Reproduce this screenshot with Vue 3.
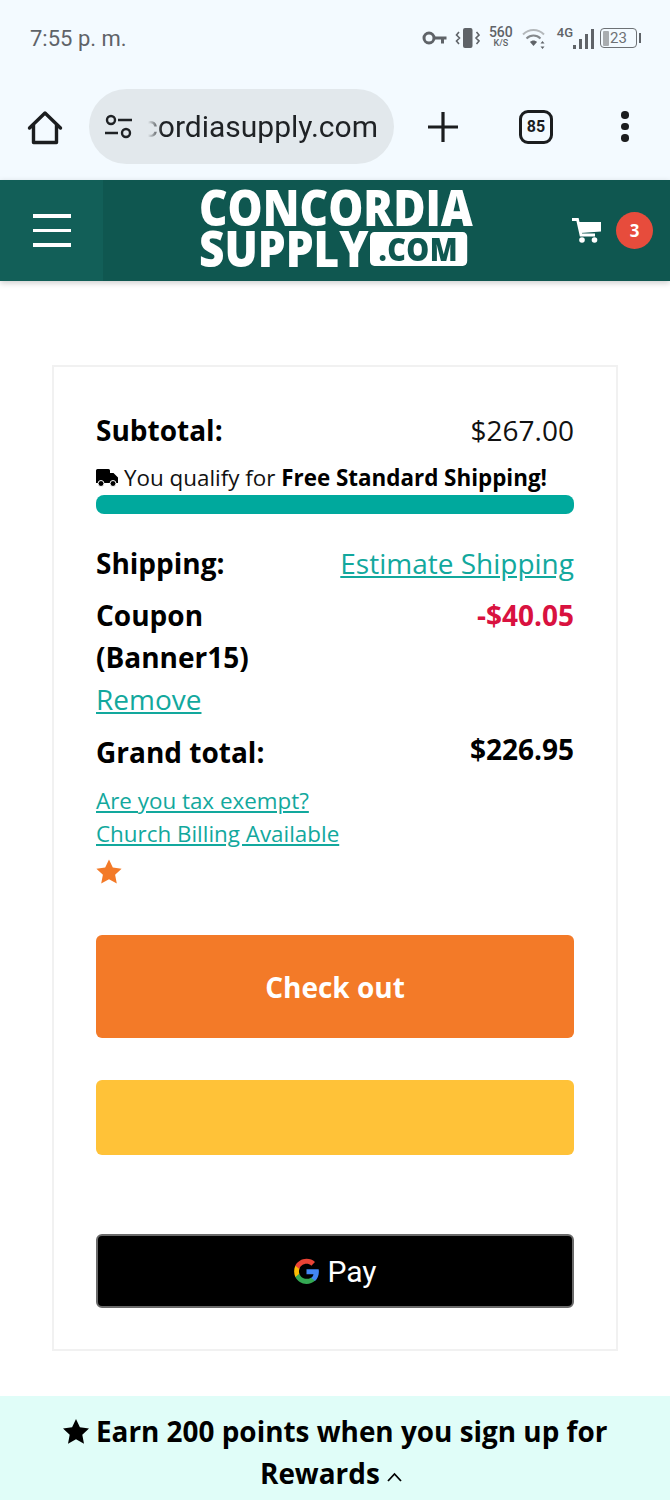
<script setup>
const summary = {
  subtotal: '$267.00',
  coupon: '-$40.05',
  total: '$226.95',
};
</script>

<template>
  <div class="screen">
    <!-- barra do sistema + navegador -->
    <div class="status-bar">
      <span class="time">7:55 p. m.</span>
      <div class="status-icons">
        <svg class="ic-key" width="25" height="14" viewBox="0 0 25 14">
          <circle cx="7" cy="7" r="5" fill="none" stroke="#5f6368" stroke-width="3" />
          <path d="M12 5.5h12.5v3H22v4h-3v-4h-7z" fill="#5f6368" />
        </svg>
        <svg class="ic-vib" width="25" height="22" viewBox="0 0 25 22">
          <rect x="8" y="1" width="9.5" height="20" rx="2" fill="#5f6368" />
          <path d="M4 5 1.5 8 4.5 11 1.5 14 4 17M21.5 5 24 8 21 11 24 14 21.5 17" fill="none" stroke="#5f6368" stroke-width="1.6" />
        </svg>
        <div class="speed"><b>560</b><i>K/S</i></div>
        <svg class="ic-wifi" width="24" height="22" viewBox="0 0 24 22">
          <path d="M1 7.5C7 1.5 16 1.5 22 7.5" fill="none" stroke="#b4b8bb" stroke-width="2" />
          <path d="M4.5 11.5C8.5 7.5 14.5 7.5 18.5 11.5" fill="none" stroke="#85898c" stroke-width="2" />
          <path d="M8 15C10 13 13 13 15 15L11.5 19z" fill="#5f6368" />
          <path d="M20.5 14l2 2.5h-4zM20.5 22l2-2.5h-4z" fill="#5f6368" />
        </svg>
        <div class="signal">
          <span class="net">4G</span>
          <div class="bars">
            <i style="height: 4px"></i><i style="height: 10px"></i><i style="height: 15px"></i><i style="height: 20px"></i>
          </div>
        </div>
        <div class="battery">
          <div class="batt-body"><i></i><span>23</span></div>
          <div class="batt-tip"></div>
        </div>
      </div>
    </div>

    <div class="browser-bar">
      <svg class="ic-home" width="36" height="36" viewBox="0 0 36 36">
        <path d="M2.5 18 18 3 33.500 18M6.500 15v17.500h23V15" fill="none" stroke="#1b1d1f" stroke-width="3.400" stroke-linejoin="round" stroke-linecap="round" />
      </svg>
      <div class="url-pill">
        <svg width="30" height="26" viewBox="0 0 30 26">
          <circle cx="7" cy="6" r="4" fill="none" stroke="#1f2225" stroke-width="2.400" />
          <path d="M14 6h14M1 19h13" stroke="#1f2225" stroke-width="2.600" />
          <circle cx="22" cy="19" r="4" fill="none" stroke="#1f2225" stroke-width="2.400" />
        </svg>
        <div class="url-clip"><span>cordiasupply.com</span></div>
      </div>
      <svg class="ic-plus" width="30" height="30" viewBox="0 0 30 30">
        <path d="M15 0v30M0 15h30" stroke="#1b1d1f" stroke-width="3.200" />
      </svg>
      <div class="tab-count">85</div>
      <div class="menu-dots"><i></i><i></i><i></i></div>
    </div>

    <!-- cabeçalho da loja -->
    <header class="site-header">
      <div class="burger"><i></i><i></i><i></i></div>
      <div class="logo">
        <div class="logo-top">CONCORDIA</div>
        <div class="logo-bottom">
          <span>SUPPLY</span><em>.COM</em>
        </div>
      </div>
      <div class="cart">
        <svg width="29" height="25" viewBox="0 0 29 25">
          <path d="M0 1.500h5.500L9 17h14" fill="none" stroke="#fff" stroke-width="2.800" />
          <path d="M6.500 4H29v9.500L8.500 15z" fill="#fff" />
          <circle cx="10" cy="22" r="2.800" fill="#fff" />
          <circle cx="22.500" cy="22" r="2.800" fill="#fff" />
        </svg>
        <span class="badge">3</span>
      </div>
    </header>

    <main class="content">
      <section class="card">
        <div class="row">
          <span class="label">Subtotal:</span>
          <span class="amount">{{ summary.subtotal }}</span>
        </div>

        <div class="ship-note">
          <svg width="22" height="18" viewBox="0 0 22 18">
            <path d="M0 1.500A1.500 1.500 0 0 1 1.500 0h11A1.500 1.500 0 0 1 14 1.500V4h3.500L22 8.500V14H0z" fill="#000" />
            <circle cx="5" cy="14.500" r="3" fill="#000" stroke="#fff" stroke-width="1" />
            <circle cx="17" cy="14.500" r="3" fill="#000" stroke="#fff" stroke-width="1" />
          </svg>
          <span>You qualify for <b>Free Standard Shipping!</b></span>
        </div>
        <div class="progress"></div>

        <div class="row ship-row">
          <span class="label">Shipping:</span>
          <a class="link big">Estimate Shipping</a>
        </div>

        <div class="row coupon-row">
          <div class="coupon-left">
            <span class="label">Coupon<br />(Banner15)</span>
            <a class="link big">Remove</a>
          </div>
          <span class="discount">{{ summary.coupon }}</span>
        </div>

        <div class="row total-row">
          <span class="label">Grand total:</span>
          <span class="total">{{ summary.total }}</span>
        </div>

        <div class="extra-links">
          <a class="link">Are you tax exempt?</a>
          <a class="link">Church Billing Available</a>
        </div>
        <svg class="star" width="26" height="25" viewBox="0 0 26 25">
          <path d="M13 0.500 16.800 8.600 25.600 9.700 19.100 15.800 20.800 24.500 13 20.200 5.200 24.500 6.900 15.800 0.400 9.700 9.200 8.600z" fill="#f37a28" />
        </svg>

        <button class="btn-checkout">Check out</button>
        <button class="btn-paypal"></button>
        <button class="btn-gpay">
          <svg width="27" height="27" viewBox="0 0 48 48">
            <path fill="#4285F4" d="M46 24.500c0-1.600-.1-3.100-.4-4.500H24v8.700h12.400c-.5 2.800-2.100 5.200-4.500 6.800v5.600h7.300c4.200-3.900 6.800-9.600 6.800-16.600z" />
            <path fill="#34A853" d="M24 46c6.100 0 11.200-2 15-5.500l-7.300-5.600c-2 1.400-4.600 2.200-7.700 2.200-5.900 0-10.900-4-12.700-9.300H4.100v5.800C7.800 41 15.400 46 24 46z" />
            <path fill="#FBBC04" d="M11.300 28c-.5-1.400-.7-2.800-.7-4.300s.3-2.900.7-4.300v-5.800H4.100C2.700 16.500 2 20 2 23.700s.7 7.200 2.100 10.100z" />
            <path fill="#EA4335" d="M24 10.400c3.300 0 6.300 1.100 8.600 3.400l6.500-6.500C35.200 3.600 30.100 1.500 24 1.500 15.400 1.500 7.800 6.500 4.100 13.600l7.200 5.800C13.100 14.300 18.100 10.400 24 10.400z" />
          </svg>
          <span>Pay</span>
        </button>
      </section>
    </main>

    <footer class="rewards">
      <svg class="rw-star" width="26" height="25" viewBox="0 0 26 25">
        <path d="M13 0 16.900 8.300 26 9.500 19.300 15.700 21 24.700 13 20.300 5 24.700 6.700 15.700 0 9.500 9.100 8.300z" fill="#000" />
      </svg>
      Earn 200 points when you sign up for Rewards
      <svg class="chev" width="15" height="10" viewBox="0 0 15 10">
        <path d="M1 9 7.500 2 14 9" fill="none" stroke="#000" stroke-width="1.800" />
      </svg>
    </footer>
  </div>
</template>

<style scoped>
.screen {
  width: 670px;
  height: 1500px;
  overflow: hidden;
  background: #fff;
  font-family: "Open Sans", sans-serif;
  color: #000;
}

/* STATUS */
.status-bar {
  height: 76px;
  box-sizing: border-box;
  background: #f3faff;
  display: flex;
  align-items: center;
  justify-content: space-between;
  padding: 0 30px 0 30px;
  font-family: Roboto, sans-serif;
  color: #5f6368;
}

.time {
  font-size: 22px;
}

.status-icons {
  display: flex;
  align-items: center;
  gap: 8px;
  margin-right: -1px;
}

.speed {
  display: flex;
  flex-direction: column;
  align-items: center;
  line-height: 11px;
  margin: 0 1px;
}

.speed b {
  font-weight: 500;
  font-size: 14px;
}

.speed i {
  font-style: normal;
  font-weight: 500;
  font-size: 9px;
}

.signal {
  display: flex;
  align-items: flex-end;
  height: 22px;
  position: relative;
  margin-left: 3px;
}

.net {
  font-size: 13px;
  font-weight: 500;
  align-self: flex-start;
  line-height: 12px;
  margin-right: 0;
}

.bars {
  display: flex;
  align-items: flex-end;
  gap: 3px;
}

.bars i {
  width: 3px;
  background: #5f6368;
}

.battery {
  display: flex;
  align-items: center;
  gap: 2px;
  margin-left: -2px;
}

.batt-body {
  width: 31px;
  height: 18px;
  border: 1.500px solid #6d7175;
  border-radius: 4px;
  display: flex;
  align-items: center;
  gap: 1px;
  padding: 0 2px;
  box-sizing: content-box;
  font-size: 15px;
  color: #6d7175;
}

.batt-body i {
  width: 6px;
  height: 15px;
  background: #a9adb0;
  border-radius: 1px;
}

.batt-tip {
  width: 2px;
  height: 10px;
  background: #5f6368;
}

/* NAVEGADOR */
.browser-bar {
  height: 104px;
  background: #f3faff;
  position: relative;
  display: flex;
  align-items: center;
  padding: 0 0 3px 27px;
  box-sizing: border-box;
}

.ic-home {
  flex: none;
  margin-top: 2px;
}

.url-pill {
  width: 305px;
  height: 75px;
  border-radius: 38px;
  background: #e2e8ec;
  margin-left: 26px;
  display: flex;
  align-items: center;
  padding-left: 15px;
  box-sizing: border-box;
  flex: none;
}

.url-clip {
  width: 232px;
  margin-left: 12px;
  flex: none;
  display: flex;
  justify-content: flex-end;
  font-family: Roboto, sans-serif;
  font-size: 30px;
  color: #1f2225;
  white-space: nowrap;
  -webkit-mask-image: linear-gradient(to right, transparent 0, transparent 2px, #000 16px);
  mask-image: linear-gradient(to right, transparent 0, transparent 2px, #000 16px);
}

.ic-plus {
  flex: none;
  margin-left: 34px;
}

.tab-count {
  flex: none;
  width: 34px;
  height: 34px;
  box-sizing: border-box;
  border: 3.500px solid #1b1d1f;
  border-radius: 9px;
  margin-left: 61px;
  display: flex;
  align-items: center;
  justify-content: center;
  font-family: Roboto, sans-serif;
  font-weight: 700;
  font-size: 16px;
  color: #1b1d1f;
}

.menu-dots {
  flex: none;
  margin-left: 68px;
  display: flex;
  flex-direction: column;
  gap: 4px;
}

.menu-dots i {
  width: 7.500px;
  height: 7.500px;
  border-radius: 50%;
  background: #1b1d1f;
}

/* HEADER */
.site-header {
  height: 101px;
  background: #0f5750;
  box-shadow: 0 2px 6px rgba(0, 0, 0, 0.2);
  display: flex;
  align-items: center;
  position: relative;
}

.burger {
  width: 103px;
  height: 100%;
  background: #125f58;
  display: flex;
  flex-direction: column;
  align-items: center;
  justify-content: center;
  gap: 11px;
  flex: none;
}

.burger i {
  width: 38px;
  height: 3.500px;
  background: #fff;
}

/* o logotipo original é mais estreito que a Open Sans */
.logo {
  margin-left: 96px;
  margin-top: -5px;
  color: #fff;
  font-weight: 800;
  width: 299px;
  margin-right: -25px;
  flex: none;
  transform: scaleX(0.9);
  transform-origin: left center;
  font-size: 49px;
  line-height: 41px;
}

.logo-top {
  white-space: nowrap;
  height: 41px;
}

.logo-bottom {
  display: flex;
  align-items: center;
  height: 41px;
  white-space: nowrap;
}

.logo-bottom em {
  font-style: normal;
  font-size: 32px;
  line-height: 34px;
  letter-spacing: 0.500px;
  background: #fff;
  color: #0f5750;
  border-radius: 5px;
  padding: 0 10px 0 9px;
  margin-left: 2px;
  margin-top: 1px;
}

.cart {
  display: flex;
  align-items: center;
  gap: 15px;
  margin-left: auto;
  padding-right: 17px;
}

.badge {
  width: 37px;
  height: 37px;
  border-radius: 50%;
  background: #e74c3c;
  color: #fff;
  font-size: 17px;
  font-weight: 700;
  display: flex;
  align-items: center;
  justify-content: center;
}

/* CARD */
.content {
  padding: 84px 52px 45px;
}

.card {
  border: 2px solid #f1f1f1;
  padding: 42px 42px 42px;
  height: 986px;
  box-sizing: border-box;
}

.row {
  display: flex;
  justify-content: space-between;
  align-items: flex-start;
}

.label {
  font-size: 28px;
  font-weight: 700;
  line-height: 42px;
}

.amount {
  font-size: 28px;
  line-height: 42px;
  color: #111;
}

.ship-note {
  display: flex;
  align-items: center;
  gap: 6px;
  font-size: 22.400px;
  line-height: 34px;
  margin-top: 10px;
  color: #111;
}

.ship-note b {
  color: #000;
}

.progress {
  height: 19px;
  background: #00a99d;
  border-radius: 8px;
  margin-top: 0;
}

.ship-row {
  margin-top: 28px;
}

.link {
  display: block;
  color: #12a89d;
  text-decoration: underline;
  font-size: 22.400px;
  line-height: 33px;
}

.link.big {
  font-size: 28px;
  line-height: 42px;
}

.coupon-row {
  margin-top: 10px;
}

.discount {
  font-size: 28px;
  font-weight: 700;
  line-height: 42px;
  color: #d9123f;
}

.total-row {
  margin-top: 11px;
}

.total {
  font-size: 28px;
  font-weight: 700;
  line-height: 36px;
}

.extra-links {
  margin-top: 11px;
}

.star {
  display: block;
  margin-top: 9px;
}

button {
  display: block;
  width: 100%;
  border: none;
  border-radius: 6px;
  font-family: inherit;
}

.btn-checkout {
  height: 103px;
  background: #f37a28;
  color: #fff;
  font-size: 28px;
  font-weight: 700;
  margin-top: 51px;
}

.btn-paypal {
  height: 75px;
  background: #ffc238;
  margin-top: 42px;
}

.btn-gpay {
  height: 74px;
  margin-top: 79px;
  background: #000;
  border: 2px solid #6a6a6a;
  display: flex;
  align-items: center;
  justify-content: center;
  gap: 7px;
  color: #fff;
  font-family: Roboto, sans-serif;
  font-weight: 400;
  font-size: 30px;
}

/* RODAPÉ */
.rewards {
  background: #e0fdf8;
  padding: 14px 50px 20px;
  text-align: center;
  font-size: 27.900px;
  font-weight: 700;
  line-height: 42px;
}

.rw-star {
  vertical-align: -2px;
}

.chev {
  vertical-align: 2px;
  margin-right: 8px;
}
</style>
